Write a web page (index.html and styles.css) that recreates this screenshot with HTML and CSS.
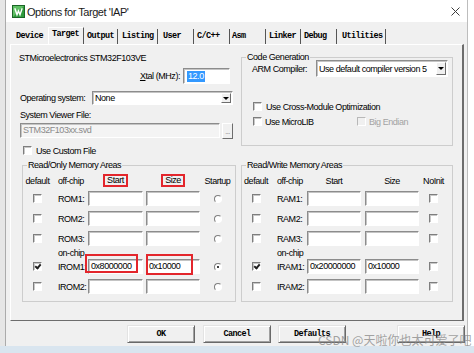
FILE: index.html
```html
<!DOCTYPE html>
<html lang="en">
<head>
  <meta charset="UTF-8">
  <title>Options for Target 'IAP'</title>
  <link rel="stylesheet" href="styles.css">
</head>
<body>
<div class="screen">
  <div class="edge"></div>
  <div class="window">
    <div class="titlebar">
      <svg class="app-icon" width="13" height="13" viewBox="0 0 13 13">
        <rect x="0.5" y="0.5" width="12" height="12" fill="#2f9a3c" stroke="#1b6626"/>
        <path d="M1 1 L12 1 L1 12 Z" fill="#5fbf64"/>
        <path d="M2.8 3.2 L5 9.8 L6.5 6 L8 9.8 L10.2 3.2" fill="none" stroke="#fff" stroke-width="1.4"/>
      </svg>
      <span class="title">Options for Target 'IAP'</span>
      <svg class="close" width="9" height="9" viewBox="0 0 9 9">
        <path d="M0.5 0.5 L8.5 8.5 M8.5 0.5 L0.5 8.5" stroke="#3c3c3c" stroke-width="1"/>
      </svg>
    </div>

    <div class="tabs">
      <span class="tab tab-device">Device</span>
      <span class="tab active tab-target">Target</span>
      <span class="tab tab-output">Output</span>
      <span class="tab tab-listing">Listing</span>
      <span class="tab tab-user">User</span>
      <span class="tab tab-cc">C/C++</span>
      <span class="tab tab-asm">Asm</span>
      <span class="tab tab-linker">Linker</span>
      <span class="tab tab-debug">Debug</span>
      <span class="tab tab-util">Utilities</span>
    </div>

    <div class="page">
      <div class="top">
        <div class="device">
          <div class="chip">STMicroelectronics STM32F103VE</div>
          <div class="xtal">
            <label><u>X</u>tal (MHz):</label>
            <div class="field xtal-field"><span class="sel">12.0</span></div>
          </div>
          <div class="os">
            <label>Operating system:</label>
            <div class="combo os-combo"><span>None</span><span class="drop"></span></div>
          </div>
          <div class="svf-label">System Viewer File:</div>
          <div class="svf">
            <div class="field disabled svf-field">STM32F103xx.svd</div>
            <div class="browse">...</div>
          </div>
          <div class="check-row custom"><span class="cb"></span>Use Custom File</div>
        </div>

        <fieldset class="group codegen">
          <legend>Code Generation</legend>
          <div class="group-body">
            <div class="arm">
              <label>ARM Compiler:</label>
              <div class="combo arm-combo"><span>Use default compiler version 5</span><span class="drop"></span></div>
            </div>
            <div class="check-row cmo"><span class="cb"></span>Use Cross-Module Optimization</div>
            <div class="check-row micro">
              <span class="opt opt-first"><span class="cb"></span>Use MicroLIB</span>
              <span class="opt disabled"><span class="cb"></span>Big Endian</span>
            </div>
          </div>
        </fieldset>
      </div>

      <div class="memory">
        <fieldset class="group mem rom">
          <legend>Read/Only Memory Areas</legend>
          <div class="mem-body">
            <div class="mrow head">
              <span class="c-def">default</span>
              <span class="c-name">off-chip</span>
              <span class="c-in"><span class="mark">Start</span></span>
              <span class="c-in2"><span class="mark">Size</span></span>
              <span class="c-end">Startup</span>
            </div>
            <div class="mrow">
              <span class="c-def"><span class="cb"></span></span>
              <span class="c-name">ROM1:</span>
              <span class="c-in"><span class="field"></span></span>
              <span class="c-in2"><span class="field"></span></span>
              <span class="c-end"><span class="radio"></span></span>
            </div>
            <div class="mrow">
              <span class="c-def"><span class="cb"></span></span>
              <span class="c-name">ROM2:</span>
              <span class="c-in"><span class="field"></span></span>
              <span class="c-in2"><span class="field"></span></span>
              <span class="c-end"><span class="radio"></span></span>
            </div>
            <div class="mrow last-off">
              <span class="c-def"><span class="cb"></span></span>
              <span class="c-name">ROM3:</span>
              <span class="c-in"><span class="field"></span></span>
              <span class="c-in2"><span class="field"></span></span>
              <span class="c-end"><span class="radio"></span></span>
            </div>
            <div class="onchip"><span class="c-def"></span><span class="c-name">on-chip</span></div>
            <div class="mrow">
              <span class="c-def"><span class="cb checked"></span></span>
              <span class="c-name">IROM1:</span>
              <span class="c-in"><span class="field">0x8000000</span><span class="hl hl-start"></span></span>
              <span class="c-in2"><span class="field">0x10000</span><span class="hl hl-size"></span></span>
              <span class="c-end"><span class="radio on"></span></span>
            </div>
            <div class="mrow">
              <span class="c-def"><span class="cb"></span></span>
              <span class="c-name">IROM2:</span>
              <span class="c-in"><span class="field"></span></span>
              <span class="c-in2"><span class="field"></span></span>
              <span class="c-end"><span class="radio"></span></span>
            </div>
          </div>
        </fieldset>

        <fieldset class="group mem ram">
          <legend>Read/Write Memory Areas</legend>
          <div class="mem-body">
            <div class="mrow head">
              <span class="c-def">default</span>
              <span class="c-name">off-chip</span>
              <span class="c-in">Start</span>
              <span class="c-in2">Size</span>
              <span class="c-end">NoInit</span>
            </div>
            <div class="mrow">
              <span class="c-def"><span class="cb"></span></span>
              <span class="c-name">RAM1:</span>
              <span class="c-in"><span class="field"></span></span>
              <span class="c-in2"><span class="field"></span></span>
              <span class="c-end"><span class="cb"></span></span>
            </div>
            <div class="mrow">
              <span class="c-def"><span class="cb"></span></span>
              <span class="c-name">RAM2:</span>
              <span class="c-in"><span class="field"></span></span>
              <span class="c-in2"><span class="field"></span></span>
              <span class="c-end"><span class="cb"></span></span>
            </div>
            <div class="mrow last-off">
              <span class="c-def"><span class="cb"></span></span>
              <span class="c-name">RAM3:</span>
              <span class="c-in"><span class="field"></span></span>
              <span class="c-in2"><span class="field"></span></span>
              <span class="c-end"><span class="cb"></span></span>
            </div>
            <div class="onchip"><span class="c-def"></span><span class="c-name">on-chip</span></div>
            <div class="mrow">
              <span class="c-def"><span class="cb checked"></span></span>
              <span class="c-name">IRAM1:</span>
              <span class="c-in"><span class="field">0x20000000</span></span>
              <span class="c-in2"><span class="field">0x10000</span></span>
              <span class="c-end"><span class="cb"></span></span>
            </div>
            <div class="mrow">
              <span class="c-def"><span class="cb"></span></span>
              <span class="c-name">IRAM2:</span>
              <span class="c-in"><span class="field"></span></span>
              <span class="c-in2"><span class="field"></span></span>
              <span class="c-end"><span class="cb"></span></span>
            </div>
          </div>
        </fieldset>
      </div>
    </div>

    <div class="buttons">
      <span class="btn btn-ok">OK</span>
      <span class="btn btn-cancel">Cancel</span>
      <span class="btn btn-defaults">Defaults</span>
      <span class="btn btn-help">Help</span>
    </div>
  </div>
</div>
<div class="watermark">CSDN @天啦你也太可爱了吧</div>
</body>
</html>
```

FILE: styles.css
```css
* {
  box-sizing: border-box;
}
body {
  margin: 0;
  width: 474px;
  height: 353px;
  overflow: hidden;
  position: relative;
  background: #d9e5ef;
  font-family: "Liberation Sans", Arial, sans-serif;
  font-size: 9px;
  letter-spacing: -0.45px;
  color: #000;
}
.screen {
  display: flex;
  height: 346px;
  background: #fff;
}
.edge {
  width: 6px;
  background: #e6e6e6;
  border-right: 1px solid #ababab;
}
.window {
  width: 462px;
  background: #f0f0f0;
  border-right: 1px solid #bdbdbd;
  display: flex;
  flex-direction: column;
  overflow: hidden;
}

/* title bar */
.titlebar {
  height: 22px;
  flex: none;
  background: #fff;
  display: flex;
  align-items: center;
  padding: 1px 0 0 6px;
}
.title {
  margin-left: 2px;
  font-size: 11px;
  letter-spacing: -0.45px;
  color: #1a1a1a;
}
.close {
  margin-left: auto;
  margin-right: 7px;
}

/* tabs */
.tabs {
  height: 22px;
  flex: none;
  display: flex;
  align-items: flex-end;
  padding-left: 6px;
  font-family: "Liberation Mono", "Courier New", monospace;
  font-size: 8.5px;
  font-weight: bold;
  letter-spacing: -0.6px;
}
.tab {
  height: 15px;
  line-height: 14px;
  padding-left: 4px;
  border-right: 1px solid #555;
  white-space: nowrap;
}
.tab.active {
  height: 17px;
  line-height: 13px;
  padding-left: 3px;
  border-top: 1px solid #fff;
  border-left: 1px solid #fff;
  margin-left: -2px;
}
.tab-device { width: 38px; border-right: 0; }
.tab-target { width: 36px; }
.tab-output { width: 34px; padding-left: 3px; }
.tab-listing { width: 40px; }
.tab-user { width: 36px; padding-left: 5px; }
.tab-cc { width: 36px; padding-left: 3px; }
.tab-asm { width: 36px; padding-left: 2px; }
.tab-linker { width: 35px; padding-left: 3px; }
.tab-debug { width: 36px; padding-left: 3px; }
.tab-util { width: 49px; padding-left: 5px; }

/* tab page */
.page {
  flex: none;
  margin-left: 4px;
  width: 454px;
  height: 277px;
  border-top: 1px solid #fff;
  border-left: 1px solid #fff;
  border-right: 2px solid #6d6d6d;
  border-bottom: 1px solid #6d6d6d;
  padding: 8px 0 0 8px;
}
.top {
  display: grid;
  grid-template-columns: 215px 212px;
  column-gap: 7px;
  align-items: start;
}
.device {
  display: flex;
  flex-direction: column;
}
.chip {
  line-height: 11px;
}
.field {
  display: block;
  background: #fff;
  border: 1px solid;
  border-color: #8c8c8c #fff #fff #8c8c8c;
  box-shadow: inset 1px 1px 0 #c4c4c4;
  white-space: nowrap;
  overflow: hidden;
}
.field.disabled {
  background: #f4f4f4;
  color: #8a8a8a;
}
.xtal {
  display: flex;
  justify-content: flex-end;
  align-items: center;
  gap: 3px;
  height: 16px;
  margin-top: 4px;
  padding-right: 4px;
}
.xtal-field {
  width: 47px;
  height: 16px;
  padding: 2px 0 0 3px;
}
.sel {
  display: inline-block;
  background: #3399ff;
  color: #fff;
  line-height: 11px;
  padding: 0 1px;
}
.combo {
  display: flex;
  align-items: center;
  background: #fff;
  border: 1px solid;
  border-color: #8c8c8c #fff #fff #8c8c8c;
  box-shadow: inset 1px 1px 0 #c4c4c4;
  padding-left: 2px;
  white-space: nowrap;
}
.drop {
  margin-left: auto;
  width: 10px;
  height: calc(100% - 2px);
  margin-right: 1px;
  background: #f0f0f0;
  border: 1px solid;
  border-color: #fff #6d6d6d #6d6d6d #fff;
  display: flex;
  align-items: center;
  justify-content: center;
}
.drop::after {
  content: "";
  border-left: 3px solid transparent;
  border-right: 3px solid transparent;
  border-top: 3px solid #000;
}
.os {
  display: flex;
  align-items: center;
  height: 14px;
  margin-top: 7px;
}
.os label {
  width: 73px;
  padding-left: 1px;
}
.os-combo {
  width: 141px;
  height: 14px;
}
.svf-label {
  margin-top: 5px;
  padding-left: 1px;
  line-height: 11px;
}
.svf {
  display: flex;
  gap: 2px;
  margin-top: 2px;
  padding-left: 1px;
}
.svf-field {
  width: 200px;
  height: 15px;
  line-height: 13px;
  padding-left: 2px;
}
.browse {
  width: 11px;
  height: 16px;
  border: 1px solid;
  border-color: #fff #6d6d6d #6d6d6d #fff;
  color: #777;
  font-size: 7px;
  line-height: 15px;
  text-align: center;
}
.check-row {
  display: flex;
  align-items: center;
  height: 9px;
  gap: 4px;
  white-space: nowrap;
}
.cb {
  display: inline-block;
  flex: none;
  width: 9px;
  height: 9px;
  background: #fff;
  border: 1px solid;
  border-color: #7e7e7e #fff #fff #7e7e7e;
  box-shadow: inset 1px 1px 0 #c8c8c8;
  position: relative;
}
.cb.checked::after {
  content: "";
  position: absolute;
  left: 2px;
  top: 0;
  width: 2px;
  height: 4px;
  border: solid #202020;
  border-width: 0 2px 2px 0;
  transform: rotate(40deg);
}
.radio {
  display: inline-block;
  width: 8px;
  height: 8px;
  border-radius: 50%;
  border: 1px solid;
  border-color: #7e7e7e #fff #fff #7e7e7e;
  background: #fff;
  position: relative;
}
.radio.on::after {
  content: "";
  position: absolute;
  left: 2px;
  top: 2px;
  width: 2px;
  height: 2px;
  border-radius: 50%;
  background: #000;
}
.custom {
  margin-top: 7px;
  padding-left: 4px;
}

/* group boxes */
fieldset.group {
  margin: 0;
  padding: 0;
  min-width: 0;
  border: 1px solid #cdcdcd;
}
fieldset.group legend {
  margin-left: 4px;
  padding: 0 1px;
  line-height: 8px;
}
.codegen {
  margin-top: 10px;
  height: 93px;
}
.codegen .group-body {
  padding: 0 4px 0 10px;
}
.arm {
  display: flex;
  align-items: center;
  height: 17px;
  margin-top: -1px;
}
.arm label {
  width: 64px;
}
.arm-combo {
  width: 132px;
  height: 17px;
}
.cmo {
  margin-top: 25px;
  padding-left: 1px;
}
.micro {
  margin-top: 6px;
  padding-left: 1px;
  gap: 0;
}
.opt {
  display: flex;
  align-items: center;
  gap: 3px;
}
.opt-first {
  width: 104px;
}
.opt.disabled {
  color: #a3a3a3;
}
.opt.disabled .cb {
  background: #f0f0f0;
  border-color: #b8b8b8 #fff #fff #b8b8b8;
  box-shadow: none;
}

/* memory areas */
.memory {
  display: grid;
  grid-template-columns: 214px 212px;
  column-gap: 5px;
  margin: 6px 0 0 3px;
}
.mem {
  height: 141px;
}
.mem-body {
  padding: 5px 0 0 3px;
}
.mrow {
  display: flex;
  align-items: center;
  height: 15px;
  margin-bottom: 5px;
  white-space: nowrap;
}
.mrow.head {
  height: 13px;
  margin-bottom: 4px;
}
.mrow.last-off {
  margin-bottom: 3px;
}
.onchip {
  display: flex;
  height: 10px;
  line-height: 8px;
}
.c-def {
  width: 23px;
  display: flex;
  justify-content: center;
}
.c-name {
  width: 39px;
  padding-left: 9px;
}
.c-in,
.c-in2 {
  width: 55px;
  height: 15px;
  display: flex;
  align-items: center;
  justify-content: center;
  position: relative;
}
.c-in2 {
  width: 54px;
  margin-left: 3px;
}
.mrow .field {
  width: 100%;
  height: 15px;
  line-height: 13px;
  padding-left: 2px;
}
.c-end {
  flex: 1;
  display: flex;
  justify-content: center;
}
.mark {
  display: inline-block;
  border: 2px solid #e3262c;
  padding: 0 2px;
  line-height: 9px;
}
.hl {
  position: absolute;
  border: 2px solid #e3262c;
}
.hl-start {
  left: -3px;
  top: -5px;
  width: 53px;
  height: 19px;
}
.hl-size {
  left: 0;
  top: -5px;
  width: 47px;
  height: 21px;
}
.ram .c-def {
  width: 22px;
}
.ram .c-name {
  width: 40px;
  padding-left: 10px;
}
.ram .c-in {
  width: 54px;
}
.ram .c-in2 {
  margin-left: 4px;
}
.ram .c-end {
  padding-right: 4px;
}

/* dialog buttons */
.buttons {
  display: flex;
  margin-top: 4px;
  padding-left: 121px;
  font-family: "Liberation Mono", "Courier New", monospace;
  font-size: 8.5px;
  font-weight: bold;
  letter-spacing: -0.6px;
}
.btn {
  flex: none;
  width: 68px;
  height: 18px;
  line-height: 16px;
  text-align: center;
  border: 1px solid;
  border-color: #e3e3e3 #696969 #696969 #e3e3e3;
  box-shadow: inset 1px 1px 0 #fff, inset -1px -1px 0 #a0a0a0;
}
.btn-cancel { margin-left: 8px; }
.btn-defaults { margin-left: 7px; }
.btn-help { margin-left: 51px; }

.watermark {
  position: absolute;
  left: 318px;
  top: 332px;
  font-family: "Noto Sans CJK SC", sans-serif;
  font-size: 12px;
  letter-spacing: 0;
  line-height: 16px;
  color: rgba(140, 140, 140, 0.8);
  white-space: nowrap;
}
```
